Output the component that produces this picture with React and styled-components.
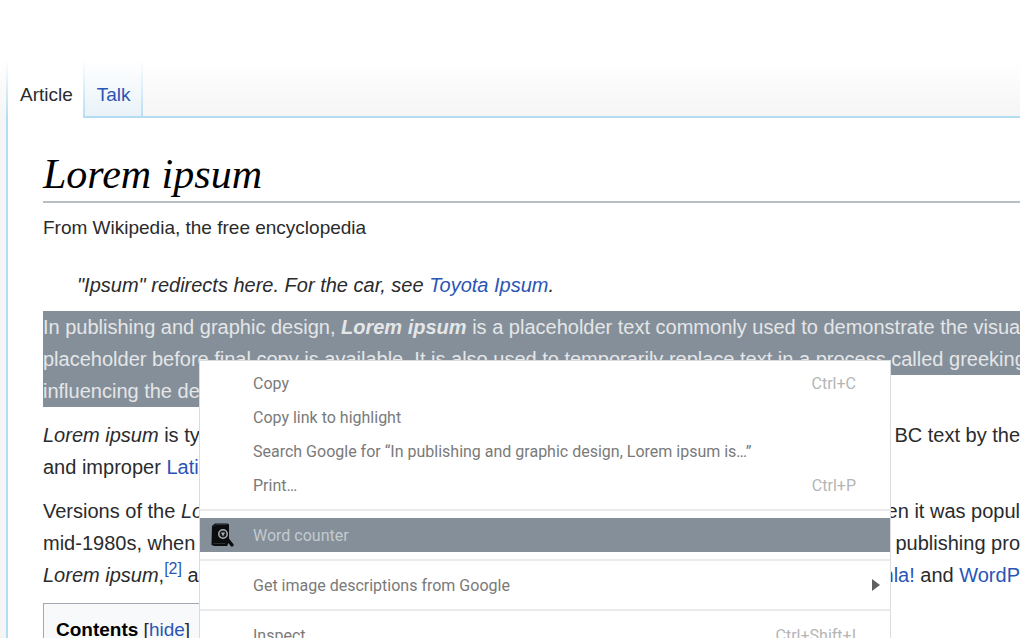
import React from "react";
import styled, { createGlobalStyle, css } from "styled-components";

const theme = {
  text: "#2a2b2d",
  link: "#2a55b5",
  border: "#b4dcf3",
  rule: "#b9bec5",
  selection: "#848f99",
  selectionText: "#e4e6e8",
  menuText: "#7a7a7a",
  menuHint: "#b5b5b5",
  menuLine: "#ebebeb",
};

const menuGroups = [
  [
    { label: "Copy", hint: "Ctrl+C" },
    { label: "Copy link to highlight" },
    {
      label: "Search Google for “In publishing and graphic design, Lorem ipsum is…”",
    },
    { label: "Print…", hint: "Ctrl+P" },
  ],
  [{ label: "Word counter", icon: true, active: true }],
  [{ label: "Get image descriptions from Google", submenu: true }],
  [{ label: "Inspect", hint: "Ctrl+Shift+I" }],
];

const BookIcon = () => (
  <svg width="24" height="26" viewBox="0 0 24 26" aria-hidden="true">
    <path d="M2 4 5 1.500h12.500l1.500 1V20l-2 4H4.500L1.500 23z" fill="#0b0c0e" />
    <path d="M3.500 4.500 6 2.500h11.500" fill="none" stroke="#34383c" strokeWidth="0.800" />
    <path d="M3.500 21.500h12" stroke="#34383c" strokeWidth="0.800" />
    <path d="m16.500 16 5.500 7" stroke="#0b0c0e" strokeWidth="3.200" strokeLinecap="round" />
    <circle cx="13" cy="12" r="6" fill="#0b0c0e" />
    <circle cx="13" cy="12" r="4.200" fill="#17191b" stroke="#a9b0b6" strokeWidth="1.500" />
    <path d="M11 10.500h4L13 14.500z" fill="#a9b0b6" />
  </svg>
);

const ContextMenu = () => (
  <MenuStyled role="menu">
    {menuGroups.map((group, index) => (
      <MenuGroup key={index}>
        {group.map(({ label, hint, icon, active, submenu }) => (
          <MenuItem key={label} role="menuitem" $active={active}>
            <IconSlot>{icon && <BookIcon />}</IconSlot>
            <MenuLabel>{label}</MenuLabel>
            {hint && <Hint>{hint}</Hint>}
            {submenu && (
              <Arrow width="8" height="12" viewBox="0 0 8 12" aria-hidden="true">
                <path d="M0 0v12l8-6z" fill="#5f5f5f" />
              </Arrow>
            )}
          </MenuItem>
        ))}
      </MenuGroup>
    ))}
  </MenuStyled>
);

const App = () => {
  return (
    <Page>
      <GlobalStyle />
      <Header>
        <Tab href="#article" $selected>
          Article
        </Tab>
        <Tab href="#talk">Talk</Tab>
        <HeaderFill />
      </Header>
      <Content>
        <Title>Lorem ipsum</Title>
        <SiteSub>From Wikipedia, the free encyclopedia</SiteSub>
        <Hatnote>
          "Ipsum" redirects here. For the car, see <Link href="#toyota">Toyota Ipsum</Link>.
        </Hatnote>
        <Paragraph $selected>
          <Line>
            In publishing and graphic design,{" "}
            <b>
              <i>Lorem ipsum</i>
            </b>{" "}
            is a placeholder text commonly used to demonstrate the visual
          </Line>
          <Line>
            placeholder before final copy is available. It is also used to temporarily replace
            text in a process called greeking
          </Line>
          <Line $short>influencing the design</Line>
        </Paragraph>
        <Paragraph>
          <SplitLine>
            <span>
              <i>Lorem ipsum</i> is ty
            </span>
            <span>
              <Link href="#century">y</Link> BC text by the
            </span>
          </SplitLine>
          <Line>
            and improper <Link href="#latin">Latin</Link>
          </Line>
        </Paragraph>
        <Paragraph>
          <SplitLine>
            <span>
              Versions of the <i>Lo</i>
            </span>
            <span>when it was popul</span>
          </SplitLine>
          <SplitLine>
            <span>mid-1980s, when</span>
            <span>publishing pro</span>
          </SplitLine>
          <SplitLine>
            <span>
              <i>Lorem ipsum</i>,
              <Sup>
                <Link href="#note2">[2]</Link>
              </Sup>{" "}
              as
            </span>
            <span>
              <Link href="#joomla">Joomla!</Link> and <Link href="#wordpress">WordP</Link>
            </span>
          </SplitLine>
        </Paragraph>
        <Contents>
          <ContentsTitle>Contents</ContentsTitle> [<Link href="#hide">hide</Link>]
        </Contents>
      </Content>
      <ContextMenu />
    </Page>
  );
};

const GlobalStyle = createGlobalStyle`
  * {
    box-sizing: border-box;
  }
  body {
    margin: 0;
    background: white;
  }
`;

const Page = styled.div`
  position: relative;
  height: 100vh;
  overflow: hidden;
  padding: 60px 0 0 6px;
  background: linear-gradient(#fff 60px, #f5f5f5 118px);
  color: ${theme.text};
  font-family: "Liberation Sans", Arial, sans-serif;
  font-size: 20px;
  line-height: 32px;
`;

const Header = styled.nav`
  display: flex;
  height: 58px;
  border-left: 2px solid;
  border-image: linear-gradient(#fff, ${theme.border}) 1;
`;

const Tab = styled.a`
  padding: 19px 10px 0 12px;
  border-right: 2px solid;
  border-image: linear-gradient(#fff, ${theme.border}) 1;
  background: linear-gradient(#fff, #e8f2f8);
  color: ${theme.link};
  font-size: 19px;
  text-decoration: none;
  box-shadow: inset 0 -2px ${theme.border};
  ${({ $selected }) =>
    $selected &&
    css`
      background: white;
      color: ${theme.text};
      box-shadow: none;
    `}
`;

const HeaderFill = styled.div`
  flex: 1;
  border-bottom: 2px solid ${theme.border};
`;

const Content = styled.main`
  height: 100%;
  padding: 32px 0 0 35px;
  border-left: 2px solid ${theme.border};
  background: white;
`;

const Title = styled.h1`
  margin: 0;
  padding-bottom: 3px;
  border-bottom: 2px solid ${theme.rule};
  color: black;
  font-family: "Liberation Serif", "Times New Roman", serif;
  font-size: 42px;
  font-style: italic;
  font-weight: normal;
  line-height: 48px;
`;

const SiteSub = styled.div`
  padding-top: 9px;
  font-size: 19px;
`;

const Hatnote = styled.div`
  padding: 25px 0 10px 34px;
  font-style: italic;
`;

const Paragraph = styled.p`
  margin: 0 0 12px;
  ${({ $selected }) =>
    $selected &&
    css`
      color: ${theme.selectionText};
      & > span {
        background: ${theme.selection};
      }
    `}
`;

const Line = styled.span`
  display: block;
  width: ${({ $short }) => ($short ? "fit-content" : "auto")};
  overflow: hidden;
  white-space: nowrap;
`;

const SplitLine = styled.span`
  display: flex;
  justify-content: space-between;
  height: 32px;
  white-space: nowrap;
`;

const Link = styled.a`
  color: ${theme.link};
  text-decoration: none;
`;

const Sup = styled.sup`
  font-size: 16px;
  line-height: 1;
`;

const Contents = styled.div`
  width: 300px;
  padding: 10px 12px;
  border: 1px solid #a2a9b1;
  background: #f8f9fa;
  font-size: 19px;
`;

const ContentsTitle = styled.b`
  color: black;
`;

const MenuStyled = styled.div`
  position: absolute;
  top: 360px;
  left: 199px;
  width: 692px;
  padding: 5px 0;
  border: 1px solid #dcdcdc;
  background: white;
  font-family: Roboto, sans-serif;
`;

const MenuGroup = styled.div`
  & + & {
    margin-top: 7px;
    padding-top: 7px;
    border-top: 2px solid ${theme.menuLine};
  }
`;

const MenuItem = styled.button`
  display: flex;
  align-items: center;
  width: 100%;
  height: 34px;
  padding: 0 34px 0 10px;
  border: 0;
  background: ${({ $active }) => ($active ? theme.selection : "white")};
  color: ${({ $active }) => ($active ? "#c3cad0" : theme.menuText)};
  font-family: inherit;
  font-size: 16px;
  text-align: left;
`;

const IconSlot = styled.span`
  display: flex;
  width: 43px;
`;

const MenuLabel = styled.span`
  flex: 1;
`;

const Hint = styled.span`
  color: ${theme.menuHint};
`;

const Arrow = styled.svg`
  margin-right: -24px;
`;

export default App;
